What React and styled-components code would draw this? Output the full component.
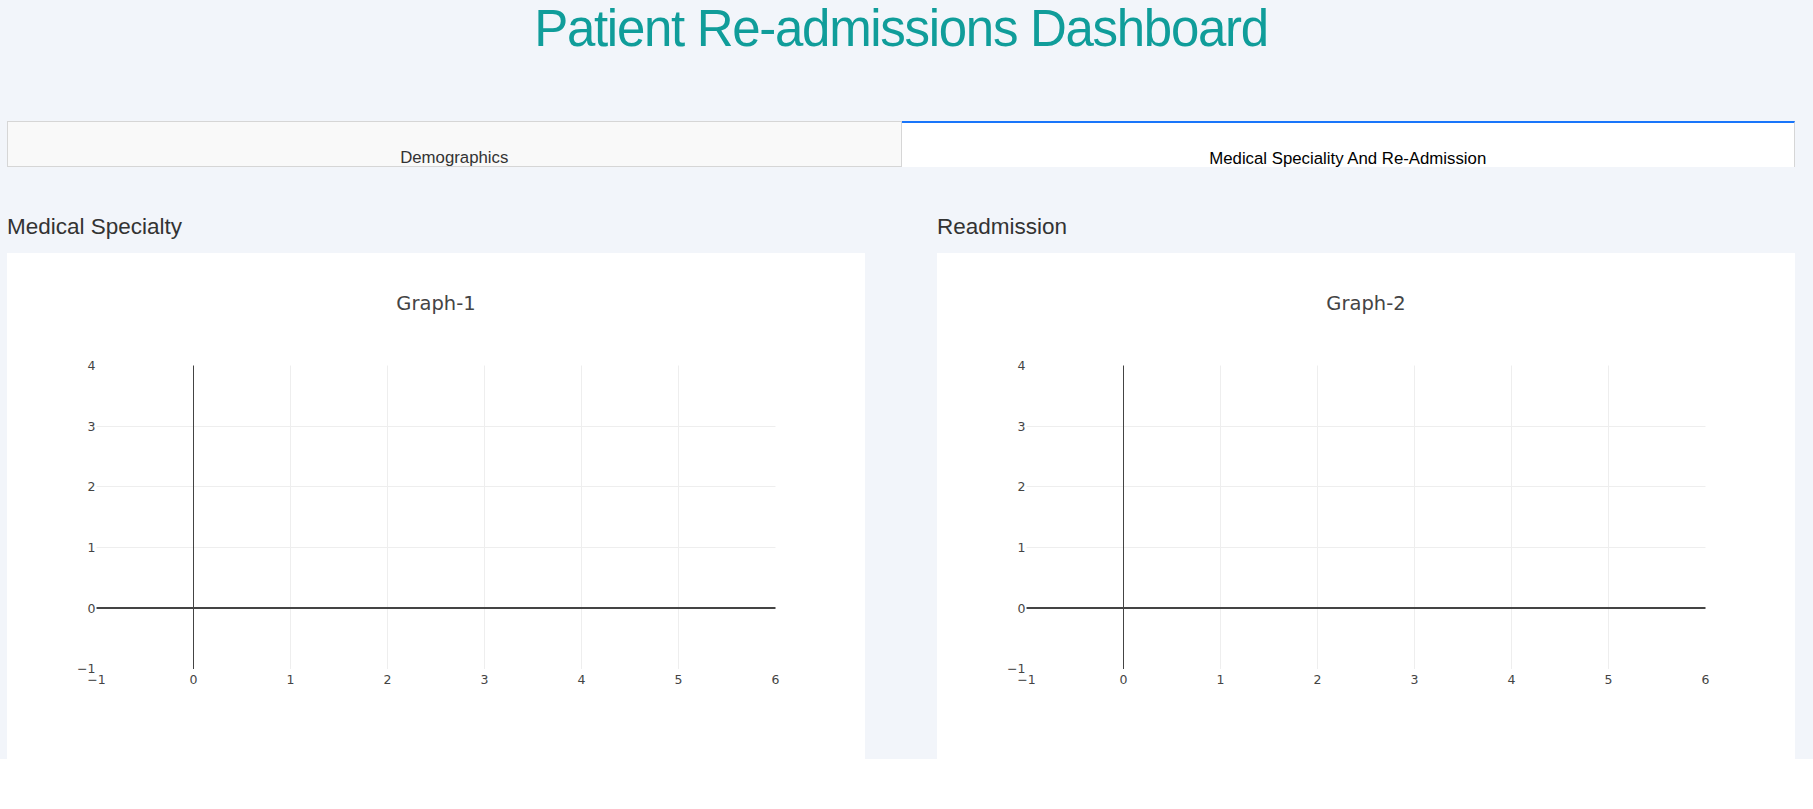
import React, { useState } from 'react';
import styled, { createGlobalStyle } from 'styled-components';

const GlobalStyle = createGlobalStyle`
  body {
    margin: 0;
    background: #ffffff;
    font-family: 'Liberation Sans', Arial, sans-serif;
  }
`;

const Page = styled.div`
  background: #f2f5fa;
  padding: 0 18px 0 7px;
`;

const Title = styled.h1`
  margin: 0;
  font-size: 51px;
  line-height: 58px;
  letter-spacing: -1.3px;
  font-weight: 400;
  text-align: center;
  color: #109d9a;
`;

const TabBar = styled.div`
  display: flex;
  margin-top: 63px;
  height: 46px;
`;

const Tab = styled.div`
  flex: 1;
  display: flex;
  align-items: flex-end;
  justify-content: center;
  box-sizing: border-box;
  font-size: 16.8px;
  line-height: 16px;
  cursor: pointer;
  color: ${(p) => (p.$active ? '#000000' : '#333333')};
  background: ${(p) => (p.$active ? '#ffffff' : '#f9f9f9')};
  border: 1px solid #d6d6d6;
  border-top: ${(p) => (p.$active ? '2px solid #1975fa' : '1px solid #d6d6d6')};
  border-bottom: ${(p) => (p.$active ? 'none' : '1px solid #d6d6d6')};
  border-left: ${(p) => (p.$active ? 'none' : '1px solid #d6d6d6')};
`;

const Row = styled.div`
  display: flex;
  justify-content: space-between;
  margin-top: 46px;
`;

const Column = styled.div`
  width: 858px;
  display: flex;
  flex-direction: column;
`;

const SectionTitle = styled.h3`
  margin: 0;
  font-size: 22.5px;
  line-height: 27px;
  font-weight: 400;
  color: #333333;
`;

const Panel = styled.div`
  margin-top: 13px;
  height: 506px;
  background: #ffffff;

  svg {
    display: block;
  }
`;

const ChartText = styled.text`
  font-family: 'DejaVu Sans', Verdana, sans-serif;
  fill: #444444;
`;

const L = 89.5;
const R = 768.5;
const T = 112.5;
const B = 416;
const xPos = (v) => L + (v + 1) * 97;
const yPos = { 4: 112.5, 3: 173.5, 2: 233.5, 1: 294.5, 0: 355.5, '-1': 416 };
const fmt = (v) => (v < 0 ? '\u2212' + Math.abs(v) : String(v));

const Chart = ({ title }) => (
  <svg width="858" height="506">
    <ChartText x="429" y="57" textAnchor="middle" fontSize="19.5">
      {title}
    </ChartText>
    {[1, 2, 3, 4, 5].map((v) => (
      <line key={'gx' + v} x1={xPos(v)} x2={xPos(v)} y1={T} y2={B} stroke="#eeeeee" />
    ))}
    {[1, 2, 3].map((v) => (
      <line key={'gy' + v} x1={L} x2={R} y1={yPos[v]} y2={yPos[v]} stroke="#eeeeee" />
    ))}
    <line x1={xPos(0)} x2={xPos(0)} y1={T} y2={B} stroke="#444444" />
    <line x1={L} x2={R} y1={355} y2={355} stroke="#444444" strokeWidth="2" />
    {[4, 3, 2, 1, 0, -1].map((v) => (
      <ChartText key={'ly' + v} x={L - 1} y={yPos[v]} dy="0.35em" textAnchor="end" fontSize="12.5">
        {fmt(v)}
      </ChartText>
    ))}
    {[-1, 0, 1, 2, 3, 4, 5, 6].map((v) => (
      <ChartText key={'lx' + v} x={xPos(v)} y={B + 11} dy="0.35em" textAnchor="middle" fontSize="12.5">
        {fmt(v)}
      </ChartText>
    ))}
  </svg>
);

const App = () => {
  const [tab, setTab] = useState('medical');

  return (
    <>
      <GlobalStyle />
      <Page>
        <Title>Patient Re-admissions Dashboard</Title>
        <TabBar>
          <Tab $active={tab === 'demo'} onClick={() => setTab('demo')}>Demographics</Tab>
          <Tab $active={tab === 'medical'} onClick={() => setTab('medical')}>
            Medical Speciality And Re-Admission
          </Tab>
        </TabBar>
        <Row>
          <Column>
            <SectionTitle>Medical Specialty</SectionTitle>
            <Panel>
              <Chart title="Graph-1" />
            </Panel>
          </Column>
          <Column>
            <SectionTitle>Readmission</SectionTitle>
            <Panel>
              <Chart title="Graph-2" />
            </Panel>
          </Column>
        </Row>
      </Page>
    </>
  );
};

export default App;
